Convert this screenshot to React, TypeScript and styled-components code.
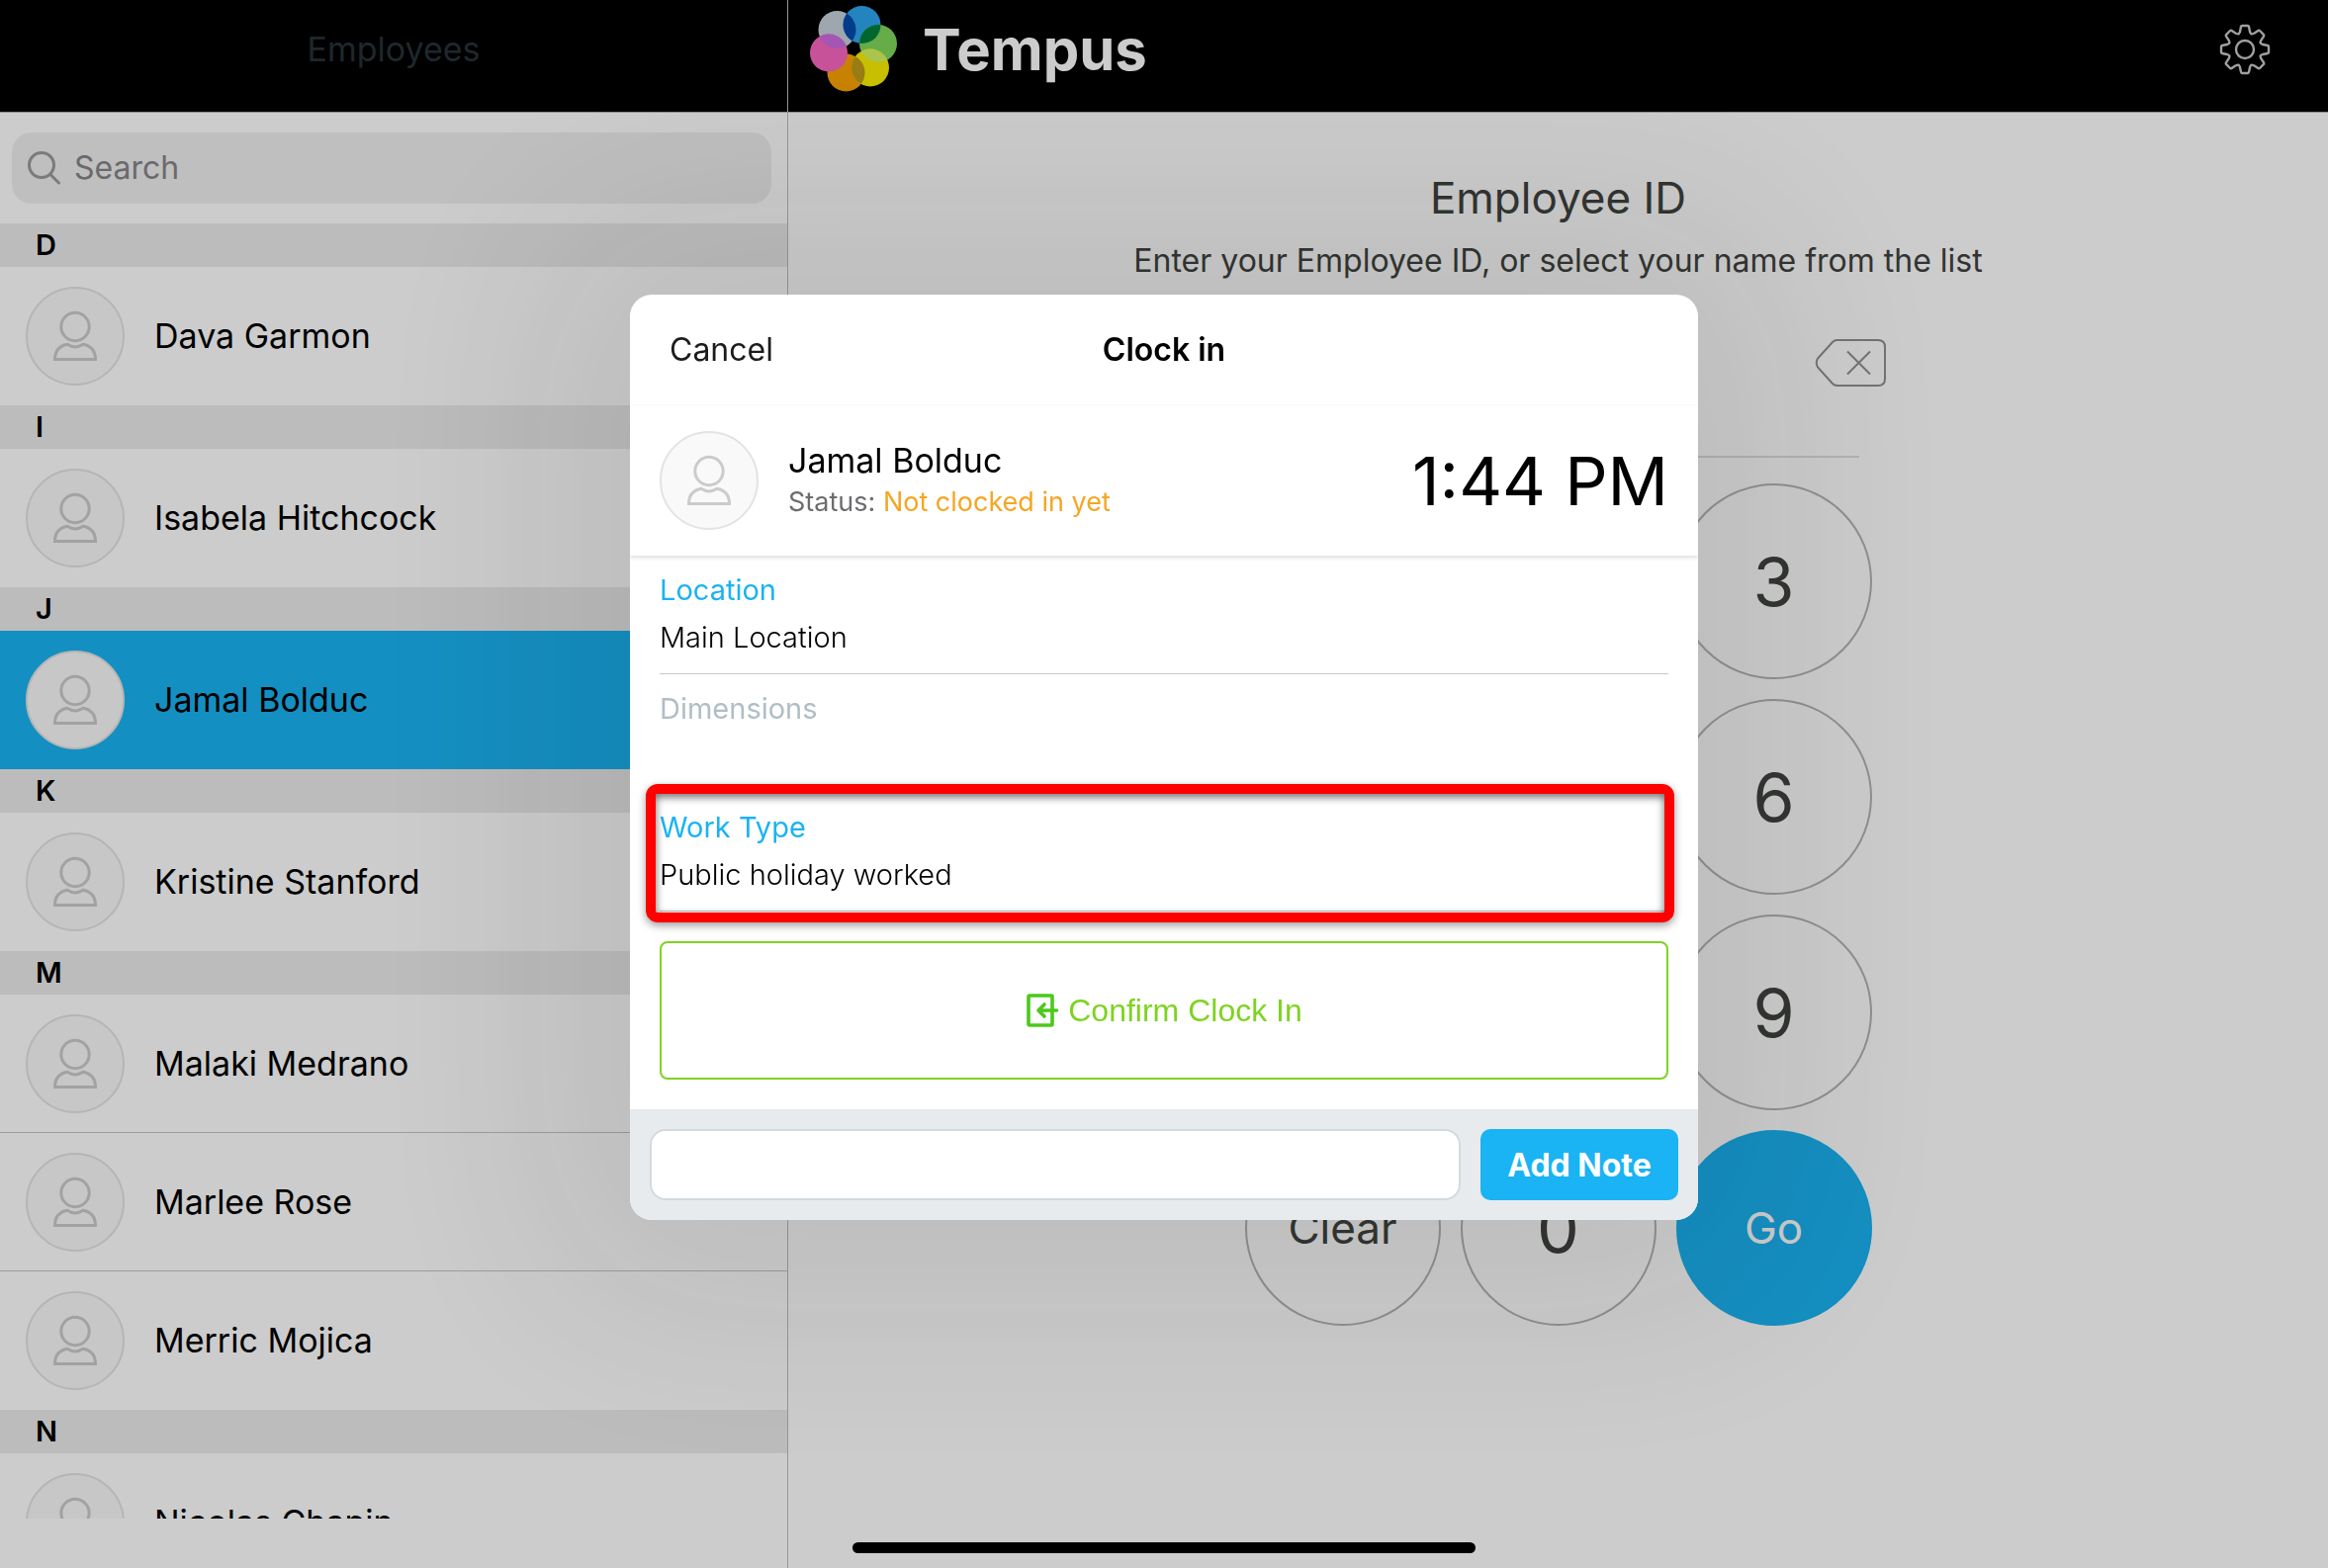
import React from "react";
import styled, { createGlobalStyle, css } from "styled-components";

const font = `Inter, "Liberation Sans", Arial, sans-serif`;

const GlobalStyle = createGlobalStyle`
  *, *::before, *::after { box-sizing: border-box; }
  html, body, #root { height: 100%; margin: 0; }
  body { font-family: ${font}; color: #000; background: #fff; overflow: hidden; }
  button, input, select { font: inherit; color: inherit; margin: 0; }
  button { cursor: pointer; }
  h1, h2, h3, p, ul { margin: 0; padding: 0; font-weight: 400; }
  ul { list-style: none; }
`;

const Screen = styled.div`
  display: grid;
  grid-template-columns: 797px minmax(0, 1fr);
  height: 100%;
`;

const Sidebar = styled.aside`
  display: flex;
  flex-direction: column;
  min-height: 0;
  padding-bottom: 50px;
  border-right: 1px solid #bdbdc0;
`;

const TopBar = styled.header`
  flex: none;
  display: flex;
  align-items: center;
  height: 114px;
  padding-bottom: 14px;
  background: #000;
  border-bottom: 1px solid #b5b0b2;
`;

const SidebarTop = styled(TopBar)`
  justify-content: center;
`;

const SidebarTitle = styled.h2`
  font-size: 34px;
  line-height: 40px;
  color: #263238;
`;

const SearchBox = styled.label`
  flex: none;
  display: flex;
  align-items: center;
  gap: 12px;
  height: 72px;
  margin: 20px 16px 20px 12px;
  padding: 0 15px;
  border-radius: 20px;
  background: #efefef;
`;

const SearchInput = styled.input`
  flex: 1;
  min-width: 0;
  border: 0;
  padding: 0;
  outline: 0;
  background: none;
  font-size: 32px;
  line-height: 40px;
  &::placeholder { color: #858587; opacity: 1; }
`;

const List = styled.div`
  flex: 1;
  min-height: 0;
  overflow: hidden;
`;

const SectionTitle = styled.h3`
  height: 44px;
  padding-left: 36px;
  font-size: 29px;
  line-height: 44px;
  font-weight: 600;
  background: #ebebeb;
`;

const Item = styled.li`
  height: 140px;
  &:not(:last-child) { border-bottom: 1px solid #c4c4c6; }
`;

const Row = styled.button<{ $selected?: boolean }>`
  display: flex;
  align-items: center;
  gap: 30px;
  width: 100%;
  height: 100%;
  padding: 0 26px;
  border: 0;
  text-align: left;
  font-size: 34px;
  line-height: 40px;
  background: ${(p) => (p.$selected ? "#1ab3f3" : "#fff")};
`;

const AvatarRing = styled.span`
  flex: none;
  display: block;
  width: 100px;
  height: 100px;
  border: 2px solid #e3e3e3;
  border-radius: 50%;
  background: #f9f9f9;
  svg { display: block; width: 96px; height: 96px; }
`;

const Main = styled.main`
  display: flex;
  flex-direction: column;
  min-width: 0;
`;

const MainTop = styled(TopBar)`
  justify-content: space-between;
  padding-left: 22px;
  padding-right: 58px;
`;

const Brand = styled.div`
  display: flex;
  align-items: center;
  gap: 24px;
  svg { display: block; }
`;

const BrandName = styled.h1`
  font-size: 58px;
  line-height: 64px;
  font-weight: 700;
  color: #fff;
`;

const IconButton = styled.button`
  display: grid;
  place-items: center;
  padding: 0;
  border: 0;
  background: none;
  svg { display: block; }
`;

const Panel = styled.section`
  display: flex;
  flex-direction: column;
  align-items: center;
  padding-top: 56px;
  color: #40423f;
`;

const PanelTitle = styled.h2`
  font-size: 44px;
  line-height: 60px;
`;

const PanelHint = styled.p`
  margin-top: 14px;
  font-size: 32px;
  line-height: 40px;
`;

const IdEntry = styled.div`
  display: flex;
  align-items: center;
  justify-content: flex-end;
  width: 662px;
  height: 118px;
  margin-top: 24px;
`;

const IdInput = styled.input`
  flex: 1;
  min-width: 0;
  height: 118px;
  border: 0;
  outline: 0;
  background: none;
  font-size: 44px;
  text-align: center;
`;

const EntryRule = styled.hr`
  width: 608px;
  height: 2px;
  margin: 35px 0 26px;
  border: 0;
  background: #dedede;
`;

const Keypad = styled.div`
  display: grid;
  grid-template-columns: repeat(3, 198px);
  gap: 20px;
`;

const Key = styled.button<{ $word?: boolean; $primary?: boolean }>`
  height: 198px;
  padding: 0;
  border: 2px solid #b4b4b4;
  border-radius: 50%;
  background: none;
  font-size: ${(p) => (p.$word ? 44 : 68)}px;
  ${(p) =>
    p.$primary &&
    css`
      border-color: #1ab3f3;
      background: #1ab3f3;
      color: #fff;
    `}
`;

const Backdrop = styled.div`
  position: fixed;
  inset: 0;
  display: grid;
  place-items: center;
  padding-bottom: 54px;
  background: rgba(0, 0, 0, 0.2);
`;

const Dialog = styled.div`
  width: 1080px;
  max-width: 100%;
  border-radius: 22px;
  overflow: hidden;
  background: #fff;
  box-shadow: 0 0 220px 90px rgba(10, 20, 0, 0.09);
`;

const DialogTop = styled.div`
  display: grid;
  grid-template-columns: 1fr auto 1fr;
  align-items: center;
  height: 112px;
  padding: 0 40px;
  border-bottom: 1px solid #fafafa;
  font-size: 32px;
  line-height: 40px;
`;

const CancelButton = styled.button`
  justify-self: start;
  padding: 0;
  border: 0;
  background: none;
  color: #1c1c1e;
`;

const DialogTitle = styled.h2`
  font-size: 32px;
  line-height: 40px;
  font-weight: 600;
`;

const Person = styled.div`
  display: flex;
  align-items: center;
  gap: 30px;
  height: 152px;
  padding: 0 30px;
  background: #fff;
  box-shadow: 0 2px 4px rgba(0, 0, 0, 0.14);
  clip-path: inset(0 0 -8px 0);
`;

const PersonText = styled.div`
  flex: 1;
  padding-top: 2px;
`;

const PersonName = styled.p`
  font-size: 34px;
  line-height: 42px;
`;

const Status = styled.p`
  font-size: 27px;
  line-height: 42px;
  color: #6d6d70;
`;

const Pending = styled.span`
  color: #f5a623;
`;

const Clock = styled.time`
  font-size: 68px;
  line-height: 84px;
`;

const Fields = styled.div`
  padding: 0 30px;
`;

const Field = styled.div<{ $ruled?: boolean }>`
  position: relative;
  display: flex;
  flex-direction: column;
  height: 120px;
  padding-top: 13px;
  border-bottom: 1px solid ${(p) => (p.$ruled ? "#c8c7cc" : "transparent")};
`;

const FieldLabel = styled.label<{ $muted?: boolean }>`
  font-size: 29px;
  line-height: 44px;
  color: ${(p) => (p.$muted ? "#b0bec5" : "#1ab3f3")};
`;

const FieldSelect = styled.select`
  appearance: none;
  height: 50px;
  padding: 0;
  border: 0;
  outline: 0;
  background: none;
  font-size: 29px;
  font-weight: 300;
`;

const Highlight = styled.span`
  position: absolute;
  inset: -9px -6px -12px -14px;
  border: 10px solid #f00;
  border-radius: 12px;
  pointer-events: none;
  box-shadow: 0 3px 8px rgba(0, 0, 0, 0.4), inset 0 3px 8px rgba(0, 0, 0, 0.6);
`;

const Confirm = styled.button`
  display: flex;
  align-items: center;
  justify-content: center;
  gap: 9px;
  width: 100%;
  height: 140px;
  margin: 30px 0;
  border: 2px solid #7ed321;
  border-radius: 8px;
  background: #fff;
  color: #7ed321;
  font-family: "Liberation Sans", Arial, sans-serif;
  font-size: 32px;
  line-height: 40px;
  svg { display: block; }
`;

const NoteBar = styled.form`
  display: flex;
  gap: 20px;
  padding: 20px;
  background: #e7ebee;
`;

const NoteInput = styled.input`
  flex: 1;
  min-width: 0;
  height: 72px;
  padding: 0 20px;
  border: 2px solid #d3dadf;
  border-radius: 16px;
  outline: 0;
  background: #fff;
  font-size: 29px;
`;

const AddNote = styled.button`
  width: 200px;
  height: 72px;
  padding: 0;
  border: 0;
  border-radius: 10px;
  background: #1ab3f3;
  color: #fff;
  font-size: 32px;
  font-weight: 700;
`;

const HomeIndicator = styled.div`
  position: fixed;
  left: 50%;
  bottom: 15px;
  width: 630px;
  height: 11px;
  border-radius: 6px;
  background: #000;
  transform: translateX(-50%);
`;

function Avatar() {
  return (
    <AvatarRing>
      <svg viewBox="2 2 96 96" fill="none" stroke="#cbcbcb" strokeWidth="3" aria-hidden="true">
        <circle cx="50" cy="40.5" r="14.2" />
        <path d="M29.5 73.5C29.5 66 33.5 60 42 58.3Q50 63.5 58 58.3C66.5 60 70.5 66 70.5 73.5Z" />
      </svg>
    </AvatarRing>
  );
}

const petals = [
  { id: "grey", x: 27.5, y: 25, fill: "#c6d0da" },
  { id: "blue", x: 52.5, y: 20, fill: "#2da5f0" },
  { id: "green", x: 69, y: 39, fill: "#80d85a" },
  { id: "orange", x: 36.5, y: 68.5, fill: "#fba300" },
  { id: "yellow", x: 61, y: 63.5, fill: "#faf000" },
  { id: "pink", x: 19, y: 48.5, fill: "#fb67c1" },
];

const overlaps = [
  { a: "grey", b: 1, fill: "#004aaf" },
  { a: "blue", b: 2, fill: "#00803c" },
  { a: "green", b: 4, fill: "#d6f55f" },
  { a: "orange", b: 4, fill: "#c09c19" },
  { a: "grey", b: 5, fill: "#cc6ce2" },
];

function Logo() {
  return (
    <svg width="90" height="90" viewBox="0 0 90 90" aria-hidden="true">
      <defs>
        {petals.map((p) => (
          <clipPath key={p.id} id={`petal-${p.id}`}>
            <circle cx={p.x} cy={p.y} r="19" />
          </clipPath>
        ))}
      </defs>
      {petals.map((p) => (
        <circle key={p.id} cx={p.x} cy={p.y} r="19" fill={p.fill} />
      ))}
      {overlaps.map((o) => (
        <circle
          key={o.a + o.b}
          cx={petals[o.b].x}
          cy={petals[o.b].y}
          r="19"
          fill={o.fill}
          clipPath={`url(#petal-${o.a})`}
        />
      ))}
    </svg>
  );
}

function gearPath() {
  const turn = (x: number, y: number, i: number) => {
    const a = (i * Math.PI) / 4;
    const rx = x * Math.cos(a) - y * Math.sin(a);
    const ry = x * Math.sin(a) + y * Math.cos(a);
    return `${rx.toFixed(2)} ${ry.toFixed(2)}`;
  };
  let d = `M${turn(-5, -18, 0)}`;
  for (let i = 0; i < 8; i++) {
    d += `L${turn(-4.2, -22, i)}Q${turn(-4, -24, i)} ${turn(-2.5, -24, i)}`;
    d += `L${turn(2.5, -24, i)}Q${turn(4, -24, i)} ${turn(4.2, -22, i)}L${turn(5, -18, i)}`;
    d += `C${turn(6.2, -15.2, i)} ${turn(-6.2, -15.2, i + 1)} ${turn(-5, -18, i + 1)}`;
  }
  return d + "Z";
}

function Gear() {
  return (
    <svg width="52" height="52" viewBox="-26 -26 52 52" fill="none" stroke="#c8c8c8" strokeWidth="2.4" aria-hidden="true">
      <path d={gearPath()} strokeLinejoin="round" />
      <circle r="9" />
    </svg>
  );
}

const people = [
  { letter: "D", names: ["Dava Garmon"] },
  { letter: "I", names: ["Isabela Hitchcock"] },
  { letter: "J", names: ["Jamal Bolduc"] },
  { letter: "K", names: ["Kristine Stanford"] },
  { letter: "M", names: ["Malaki Medrano", "Marlee Rose", "Merric Mojica"] },
  { letter: "N", names: ["Nicolas Chapin"] },
];

export default function App() {
  return (
    <>
      <GlobalStyle />
      <Screen>
        <Sidebar>
          <SidebarTop>
            <SidebarTitle>Employees</SidebarTitle>
          </SidebarTop>
          <SearchBox>
            <svg width="36" height="36" viewBox="0 0 36 36" fill="none" stroke="#9a9a9c" strokeWidth="3" strokeLinecap="round" aria-hidden="true">
              <circle cx="15" cy="15" r="12.5" />
              <path d="M24 24.5L32.5 33" />
            </svg>
            <SearchInput type="search" placeholder="Search" aria-label="Search" />
          </SearchBox>
          <List>
            {people.map((group) => (
              <section key={group.letter}>
                <SectionTitle>{group.letter}</SectionTitle>
                <ul>
                  {group.names.map((name) => (
                    <Item key={name}>
                      <Row type="button" $selected={name === "Jamal Bolduc"}>
                        <Avatar />
                        {name}
                      </Row>
                    </Item>
                  ))}
                </ul>
              </section>
            ))}
          </List>
        </Sidebar>

        <Main>
          <MainTop>
            <Brand>
              <Logo />
              <BrandName>Tempus</BrandName>
            </Brand>
            <IconButton type="button" aria-label="Settings">
              <Gear />
            </IconButton>
          </MainTop>
          <Panel>
            <PanelTitle>Employee ID</PanelTitle>
            <PanelHint>Enter your Employee ID, or select your name from the list</PanelHint>
            <IdEntry>
              <IdInput type="text" aria-label="Employee ID" />
              <IconButton type="button" aria-label="Delete">
                <svg width="72" height="50" viewBox="0 0 72 50" fill="none" stroke="#909090" strokeWidth="2" aria-hidden="true">
                  <path d="M22.5 2H64Q71 2 71 9V41Q71 48 64 48H22.5Q20 48 18 46L3 29.5Q0.5 25 3 20.5L18 4Q20 2 22.5 2Z" />
                  <path d="M33 13.5L56 36.5M56 13.5L33 36.5" />
                </svg>
              </IconButton>
            </IdEntry>
            <EntryRule />
            <Keypad>
              {["1", "2", "3", "4", "5", "6", "7", "8", "9"].map((n) => (
                <Key key={n} type="button">{n}</Key>
              ))}
              <Key type="button" $word>Clear</Key>
              <Key type="button">0</Key>
              <Key type="button" $word $primary>Go</Key>
            </Keypad>
          </Panel>
        </Main>
      </Screen>

      <Backdrop>
        <Dialog role="dialog" aria-label="Clock in">
          <DialogTop>
            <CancelButton type="button">Cancel</CancelButton>
            <DialogTitle>Clock in</DialogTitle>
          </DialogTop>
          <Person>
            <Avatar />
            <PersonText>
              <PersonName>Jamal Bolduc</PersonName>
              <Status>
                Status: <Pending>Not clocked in yet</Pending>
              </Status>
            </PersonText>
            <Clock>1:44 PM</Clock>
          </Person>
          <Fields>
            <Field $ruled>
              <FieldLabel htmlFor="location">Location</FieldLabel>
              <FieldSelect id="location">
                <option>Main Location</option>
              </FieldSelect>
            </Field>
            <Field>
              <FieldLabel htmlFor="dimensions" $muted>Dimensions</FieldLabel>
              <FieldSelect id="dimensions" />
            </Field>
            <Field $ruled>
              <FieldLabel htmlFor="work-type">Work Type</FieldLabel>
              <FieldSelect id="work-type">
                <option>Public holiday worked</option>
              </FieldSelect>
              <Highlight />
            </Field>
            <Confirm type="button">
              <svg width="34" height="34" viewBox="0 0 34 34" fill="none" stroke="#4cc91a" strokeWidth="3.6" strokeLinecap="round" strokeLinejoin="round" aria-hidden="true">
                <rect x="3" y="2" width="24" height="30" rx="1" />
                <path d="M31.5 17H13M19 11L13 17L19 23" />
              </svg>
              Confirm Clock In
            </Confirm>
          </Fields>
          <NoteBar>
            <NoteInput type="text" aria-label="Note" />
            <AddNote type="button">Add Note</AddNote>
          </NoteBar>
        </Dialog>
      </Backdrop>
      <HomeIndicator />
    </>
  );
}
